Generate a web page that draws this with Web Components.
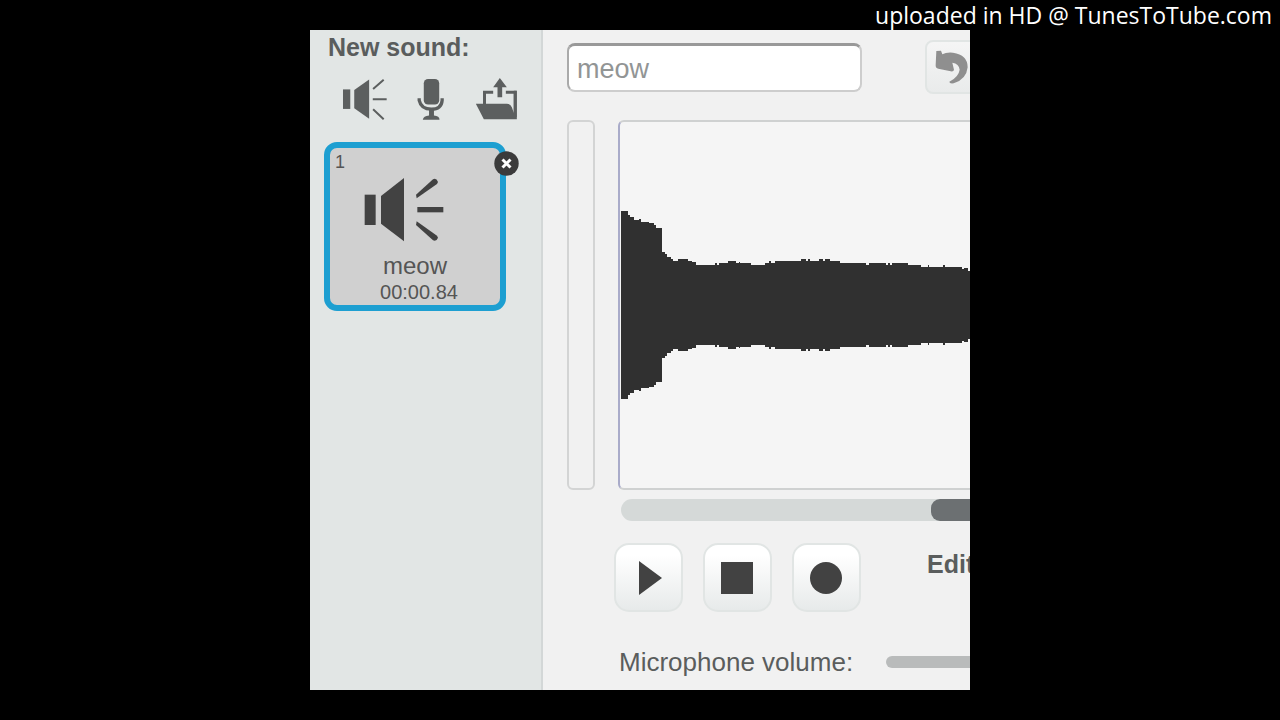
<!DOCTYPE html>
<html lang="en">
<head>
<meta charset="UTF-8">
<meta name="viewport" content="width=device-width, initial-scale=1">
<title>Sounds</title>
<style>
    body {
        margin: 0;
        background: #000;
        font-family: "Liberation Sans", Arial, sans-serif;
        color: #5a5d5d;
    }
</style>
</head>
<body>
<sound-page>
    <sound-library slot="library">
        <sound-card index="1" name="meow" duration="00:00.84"></sound-card>
    </sound-library>
    <sound-editor slot="editor" name="meow"></sound-editor>
</sound-page>

<script>
const speaker = `
    <rect x="164" y="193" width="33" height="91"/>
    <path d="M213 197L282 143V333L213 280z"/>
    <path d="M318 193L369 147Q379 142 384 155L381 161L320 204z"/>
    <rect x="322" y="230" width="78" height="16"/>
    <path d="M318 284L369 330Q379 335 384 322L381 316L320 273z"/>`;

class SoundPage extends HTMLElement {
    constructor() {
        super();
        this.attachShadow({ mode: 'open' });
        this.shadowRoot.innerHTML = `
            <style>
                :host { display: grid; grid-template-rows: 30px 1fr; height: 100vh; padding-bottom: 30px; box-sizing: border-box; }
                header {
                    text-align: right; padding-right: 8px; color: #fff; white-space: nowrap;
                    font: 23px/30px "Open Sans", "Noto Sans", sans-serif;
                }
                main {
                    display: grid; grid-template-columns: 233px 1fr; justify-self: center;
                    height: 100%; min-height: 0; aspect-ratio: 1; overflow: hidden; background: #f1f1f1;
                }
            </style>
            <header>uploaded in HD @ TunesToTube.com</header>
            <main>
                <slot name="library"></slot>
                <slot name="editor"></slot>
            </main>
        `;
    }
}
customElements.define('sound-page', SoundPage);

class SoundLibrary extends HTMLElement {
    constructor() {
        super();
        this.attachShadow({ mode: 'open' });
        this.shadowRoot.innerHTML = `
            <style>
                :host { display: block; background: #e2e6e5; border-right: 2px solid #d3d7d7; padding: 2px 14px; }
                h2 { margin: 0; padding-left: 4px; font-size: 25px; line-height: 30px; white-space: nowrap; }
                .tools { display: flex; align-items: center; gap: 30px; padding: 16px 0 22px 18px; }
                button { display: flex; padding: 0; border: 0; background: none; color: #5c5f5f; cursor: pointer; }
                svg { display: block; fill: currentColor; }
            </style>
            <h2>New sound:</h2>
            <div class="tools">
                <button aria-label="Choose sound from library">
                    <svg viewBox="96 145 136 124" width="45" height="42">
                        <rect x="99" y="178" width="22" height="59"/>
                        <path d="M133 180L178 148V267L133 235z"/>
                        <path d="M190 177L222 149M189 208H231M190 238L222 268" fill="none" stroke="currentColor" stroke-width="6"/>
                    </svg>
                </button>
                <button aria-label="Record new sound">
                    <svg viewBox="320 142 84 128" width="28" height="42">
                        <rect x="340" y="145" width="47" height="78" rx="13"/>
                        <path d="M326 204V210Q332 237 363 237T396 210V204" fill="none" stroke="currentColor" stroke-width="10"/>
                        <path d="M356 236H371V256Q388 257 388 269H337Q339 257 356 256z"/>
                    </svg>
                </button>
                <button aria-label="Upload sound from file">
                    <svg viewBox="496 138 128 126" width="43" height="42">
                        <path d="M570 138L591 166H577V196H563V166H550z"/>
                        <path d="M550 181H524V219M588 181H616V255" fill="none" stroke="currentColor" stroke-width="9"/>
                        <path d="M498 215H591Q602 216 606 226L612 243V176H621V262H522z"/>
                    </svg>
                </button>
            </div>
            <slot></slot>
        `;
    }
}
customElements.define('sound-library', SoundLibrary);

class SoundCard extends HTMLElement {
    constructor() {
        super();
        this.attachShadow({ mode: 'open' });
    }

    connectedCallback() {
        this.shadowRoot.innerHTML = `
            <style>
                :host {
                    display: flex; flex-direction: column; align-items: center; position: relative;
                    width: 170px; height: 157px; border: 6px solid #1d9fd1; border-radius: 13px;
                    background: #d0d0d0; color: #555;
                }
                .index { align-self: flex-start; padding: 4px 0 0 5px; font-size: 18px; line-height: 20px; }
                .icon { margin: 5px 22px 0 0; fill: #424242; }
                .name { padding-top: 11px; font-size: 24px; line-height: 26px; }
                .time { padding-left: 8px; font-size: 20px; line-height: 26px; }
                button {
                    position: absolute; top: 3px; right: -19px; width: 25px; height: 25px;
                    padding: 0; border: 0; background: none; cursor: pointer;
                }
                button svg { display: block; }
            </style>
            <span class="index">${this.getAttribute('index')}</span>
            <svg class="icon" viewBox="162 140 243 195" width="81" height="65">${speaker}</svg>
            <span class="name">${this.getAttribute('name')}</span>
            <span class="time">${this.getAttribute('duration')}</span>
            <button aria-label="Delete sound">
                <svg viewBox="0 0 25 25" width="25" height="25">
                    <circle cx="12.5" cy="12.5" r="12.2" fill="#3b3b3b"/>
                    <path d="M8.5 8.5L16.5 16.5M16.5 8.5L8.5 16.5" stroke="#fff" stroke-width="3"/>
                </svg>
            </button>
        `;
    }
}
customElements.define('sound-card', SoundCard);

class WaveForm extends HTMLElement {
    constructor() {
        super();
        this.attachShadow({ mode: 'open' });
        // [x, top] of every step, mirrored around the middle line
        this.middle = 345;
        this.steps = [
            [62, 62], [83, 75], [90, 80], [103, 91], [117, 88], [122, 97], [142, 95], [148, 100], [162, 106],
            [168, 115], [187, 185], [194, 193], [202, 200], [212, 207], [219, 212], [233, 207], [265, 212],
            [277, 215], [288, 225], [344, 219], [350, 224], [357, 219], [384, 214], [408, 219], [416, 215],
            [421, 220], [454, 226], [494, 220], [508, 214], [514, 219], [526, 213], [604, 206], [617, 213],
            [624, 207], [630, 213], [656, 206], [669, 213], [676, 206], [689, 213], [721, 220], [799, 226],
            [806, 220], [858, 226], [864, 220], [870, 226], [875, 220], [923, 226], [962, 232], [984, 226],
            [988, 232], [1029, 226], [1035, 232], [1087, 238], [1093, 234], [1105, 244]
        ];
    }

    connectedCallback() {
        const path = this.steps.map(([x, top], i) => {
            const next = this.steps[i + 1] ? this.steps[i + 1][0] : 1130;
            return `M${x} ${top}H${next}V${this.middle * 2 - top}H${x}z`;
        }).join('');
        this.shadowRoot.innerHTML = `
            <style>
                :host {
                    display: block; min-width: 0; min-height: 0; overflow: hidden; background: #f5f5f5;
                    border: 2px solid #cfd1d1; border-left-color: #a9abc9; border-right: 0; border-radius: 6px 0 0 6px;
                }
                svg { display: block; width: 100%; height: 100%; }
            </style>
            <svg viewBox="60 -204 1050 1098" preserveAspectRatio="none" shape-rendering="crispEdges">
                <path d="${path}" fill="#303030"/>
            </svg>
        `;
    }
}
customElements.define('wave-form', WaveForm);

class IconButton extends HTMLElement {
    constructor() {
        super();
        this.attachShadow({ mode: 'open' });
    }

    connectedCallback() {
        this.shadowRoot.innerHTML = `
            <style>
                :host { display: block; flex: none; width: 69px; height: 69px; }
                button {
                    display: flex; align-items: center; justify-content: center; box-sizing: border-box;
                    width: 100%; height: 100%; padding: 0; border: 2px solid #e1e5e4; cursor: pointer;
                    border-radius: var(--radius, 15px); background: var(--face, linear-gradient(#fff 15%, #e7eaea));
                }
            </style>
            <button aria-label="${this.getAttribute('label')}"><slot></slot></button>
        `;
    }
}
customElements.define('icon-button', IconButton);

class SoundEditor extends HTMLElement {
    constructor() {
        super();
        this.attachShadow({ mode: 'open' });
    }

    connectedCallback() {
        this.shadowRoot.innerHTML = `
            <style>
                :host {
                    display: flex; flex-direction: column; min-width: 0; min-height: 0; overflow: hidden;
                    box-sizing: border-box; padding: 10px 0 12px 24px; white-space: nowrap;
                }
                .top { display: flex; align-items: center; gap: 63px; }
                .top input {
                    box-sizing: border-box; width: 295px; height: 49px; padding: 4px 8px 0; flex: none;
                    border: 2px solid #cdcdcd; border-top: 3px solid #999; border-left-color: #aaa; border-radius: 8px;
                    background: #fff; color: #929595; font: 27px "Liberation Sans", Arial, sans-serif;
                }
                .undo { width: 69px; height: 54px; --radius: 8px; --face: linear-gradient(#f5f5f5, #e9ebeb); }
                .wave { display: grid; grid-template-columns: 28px 1fr; gap: 23px; flex: 1; min-height: 0; margin: 26px 0 9px; }
                .meter { border: 2px solid #d3d4d4; border-radius: 6px; }
                .scroll { display: flex; height: 22px; margin-left: 54px; overflow: hidden; border-radius: 11px 0 0 11px; background: #d5d9d8; }
                .thumb { flex: 1; margin-left: 310px; border-radius: 9px 0 0 9px; background: #6c7072; }
                .controls { display: flex; gap: 20px; margin: 22px 0 34px; padding-left: 47px; }
                .edit { padding: 6px 0 0 46px; font-size: 25px; line-height: 30px; font-weight: bold; }
                .volume { display: flex; align-items: center; gap: 33px; padding-left: 52px; font-size: 26px; line-height: 32px; }
                input[type="range"] {
                    appearance: none; flex: none; width: 220px; height: 12px; margin: 0;
                    border-radius: 6px; background: #b9bbbb;
                }
                input[type="range"]::-webkit-slider-thumb {
                    appearance: none; width: 24px; height: 24px; border-radius: 50%; background: #6c7072;
                }
                svg { display: block; fill: #424242; }
            </style>
            <div class="top">
                <input type="text" aria-label="Sound name" value="${this.getAttribute('name')}">
                <icon-button class="undo" label="Undo">
                    <svg viewBox="1156 58 150 102" width="50" height="34">
                        <path d="M1160 61L1174 60L1178 71Q1190 64 1210 66Q1254 72 1254 110Q1250 147 1212 158Q1199 160 1199 153Q1227 139 1230 117Q1228 99 1208 96L1213 117Q1212 124 1203 122L1166 114Q1157 112 1158 103z" fill="#8f8f8f"/>
                    </svg>
                </icon-button>
            </div>
            <div class="wave">
                <div class="meter"></div>
                <wave-form></wave-form>
            </div>
            <div class="scroll"><div class="thumb"></div></div>
            <div class="controls">
                <icon-button label="Play">
                    <svg viewBox="0 0 34 34" width="34" height="34"><path d="M7 0L30 17L7 34z"/></svg>
                </icon-button>
                <icon-button label="Stop">
                    <svg viewBox="0 0 34 34" width="34" height="34"><rect x="0" y="1" width="32" height="32"/></svg>
                </icon-button>
                <icon-button label="Record">
                    <svg viewBox="0 0 34 34" width="34" height="34"><circle cx="16" cy="17" r="16"/></svg>
                </icon-button>
                <span class="edit">Edit</span>
            </div>
            <div class="volume">
                <label for="volume">Microphone volume:</label>
                <input type="range" id="volume" min="0" max="100" value="70">
            </div>
        `;
    }
}
customElements.define('sound-editor', SoundEditor);
</script>
</body>
</html>
